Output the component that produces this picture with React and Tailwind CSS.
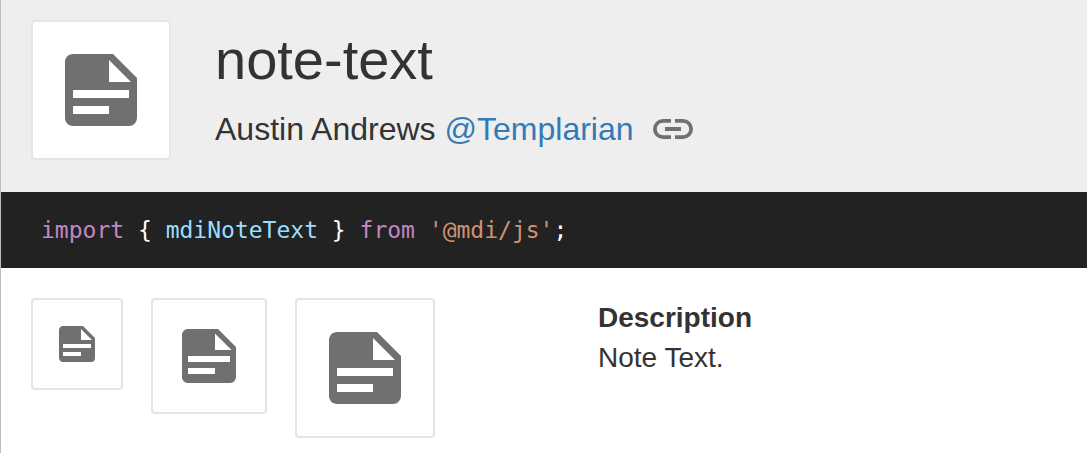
const NOTE = "M14,10H19.5L14,4.5V10M5,3H15L21,9V19A2,2 0 0,1 19,21H5C3.89,21 3,20.1 3,19V5C3,3.89 3.89,3 5,3M5,12V14H19V12H5M5,16V18H14V16H5Z";
const LINK = "M3.9,12C3.9,10.29 5.29,8.9 7,8.9H11V7H7A5,5 0 0,0 2,12A5,5 0 0,0 7,17H11V15.1H7C5.29,15.1 3.9,13.71 3.9,12M8,13H16V11H8V13M17,7H13V8.9H17C18.71,8.9 20.1,10.29 20.1,12C20.1,13.71 18.71,15.1 17,15.1H13V17H17A5,5 0 0,0 22,12A5,5 0 0,0 17,7Z";

function Icon({ d, className }) {
  return (
    <svg viewBox="0 0 24 24" className={className} aria-hidden="true">
      <path d={d} fill="#707070" />
    </svg>
  );
}

function Tile({ box, icon }) {
  return (
    <div className={`${box} flex shrink-0 items-center justify-center rounded-[4px] border-2 border-[#e5e5e5] bg-white`}>
      <Icon d={NOTE} className={icon} />
    </div>
  );
}

export default function App() {
  return (
    <div className="h-[453px] overflow-hidden border-l border-[#bdbdbd] bg-white font-['Liberation_Sans',Arial,sans-serif] text-[#333333]">
      <header className="flex h-[192px] bg-[#eeeeee] pl-[30px] pt-[20px]">
        <Tile box="h-[140px] w-[140px]" icon="h-[96px] w-[96px]" />
        <div className="ml-[44px]">
          <h1 className="mt-[9px] text-[56px] leading-[62px] font-normal">note-text</h1>
          <div className="mt-[14px] flex items-center text-[32px] leading-[44px]">
            <span>Austin Andrews</span>
            <a className="ml-[9px] text-[#337ab7]">@Templarian</a>
            <Icon d={LINK} className="ml-[15px] h-[48px] w-[48px]" />
          </div>
        </div>
      </header>
      <div className="flex h-[76px] items-center whitespace-pre bg-[#222222] pl-[40px] font-['DejaVu_Sans_Mono',monospace] text-[23px] text-white">
        <span className="text-[#c586c0]">import</span>
        <span> {"{"} </span>
        <span className="text-[#9cdcfe]">mdiNoteText</span>
        <span> {"}"} </span>
        <span className="text-[#c586c0]">from</span>
        <span> </span>
        <span className="text-[#ce9178]">'@mdi/js'</span>
        <span>;</span>
      </div>
      <main className="flex items-start pl-[30px] pt-[30px]">
        <Tile box="h-[92px] w-[92px]" icon="h-[48px] w-[48px]" />
        <div className="ml-[28px]"><Tile box="h-[116px] w-[116px]" icon="h-[72px] w-[72px]" /></div>
        <div className="ml-[28px]"><Tile box="h-[140px] w-[140px]" icon="h-[96px] w-[96px]" /></div>
        <div className="ml-[163px] text-[28px] leading-[40px]">
          <div className="font-bold">Description</div>
          <div>Note Text.</div>
        </div>
      </main>
    </div>
  );
}
